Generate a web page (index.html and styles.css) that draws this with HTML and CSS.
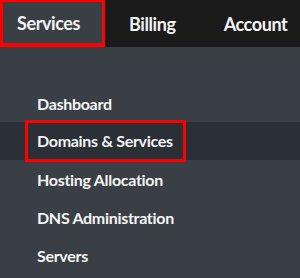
FILE: index.html
```
<!DOCTYPE html>
<html>
<head>
<meta charset="utf-8">
<link rel="stylesheet" href="styles.css">
</head>
<body>
<div class="page">
  <nav class="topbar">
    <div class="tab tab-active">Services</div>
    <div class="tab">Billing</div>
    <div class="tab">Account</div>
  </nav>
  <ul class="menu">
    <li class="item">Dashboard</li>
    <li class="item item-current"><span class="mark">Domains &amp; Services</span></li>
    <li class="item">Hosting Allocation</li>
    <li class="item">DNS Administration</li>
    <li class="item">Servers</li>
  </ul>
</div>
</body>
</html>
```
FILE: styles.css
```
html, body {
  margin: 0;
  padding: 0;
}
body {
  width: 300px;
  height: 278px;
  overflow: hidden;
  background: #3a3f46;
  font-family: "Lato", "Liberation Sans", sans-serif;
  color: #f4f4f4;
}
.page {
  display: flex;
  flex-direction: column;
}
.topbar {
  display: flex;
  height: 47px;
  background: #1b1b1b;
  overflow: hidden;
}
.tab {
  display: flex;
  align-items: center;
  flex-shrink: 0;
  padding: 0 24px;
  font-size: 18px;
  font-weight: 700;
  letter-spacing: -0.4px;
}
.tab-active {
  box-sizing: border-box;
  width: 105px;
  padding-left: 14px;
  background: #3a3f46;
  border: 3px solid #ff0000;
  border-top-width: 2px;
  border-bottom-width: 4px;
}
.menu {
  list-style: none;
  margin: 0;
  padding: 37px 0 0 0;
  display: flex;
  flex-direction: column;
}
.item {
  height: 38px;
  display: flex;
  align-items: center;
  padding-left: 37px;
  font-size: 16px;
  font-weight: 700;
  letter-spacing: -0.3px;
}
.item-current {
  background: #2b2f36;
}
.mark {
  display: inline-block;
  line-height: 36px;
  margin-left: -12px;
  padding: 0 10px 0 9px;
  border: 3px solid #ff0000;
}
```
